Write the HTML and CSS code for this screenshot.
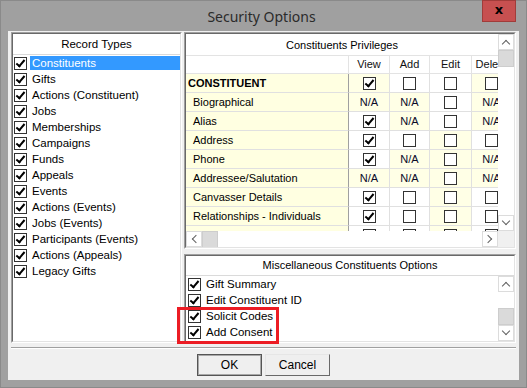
FILE: index.html
```html
<!DOCTYPE html>
<html lang="en">
<head>
    <meta charset="UTF-8">
    <title>Security Options</title>
    <link rel="stylesheet" href="styles.css">
</head>
<body>
<div class="window">
    <div class="titlebar">
        <span class="title">Security Options</span>
        <div class="close">x</div>
    </div>
    <div class="client">
        <div class="panes">
            <div class="sunken records">
                <div class="inner">
                    <div class="list-head">Record Types</div>
                    <ul class="list">
                        <li class="selected"><span class="chk on"></span><span class="label">Constituents</span></li>
                        <li><span class="chk on"></span><span class="label">Gifts</span></li>
                        <li><span class="chk on"></span><span class="label">Actions (Constituent)</span></li>
                        <li><span class="chk on"></span><span class="label">Jobs</span></li>
                        <li><span class="chk on"></span><span class="label">Memberships</span></li>
                        <li><span class="chk on"></span><span class="label">Campaigns</span></li>
                        <li><span class="chk on"></span><span class="label">Funds</span></li>
                        <li><span class="chk on"></span><span class="label">Appeals</span></li>
                        <li><span class="chk on"></span><span class="label">Events</span></li>
                        <li><span class="chk on"></span><span class="label">Actions (Events)</span></li>
                        <li><span class="chk on"></span><span class="label">Jobs (Events)</span></li>
                        <li><span class="chk on"></span><span class="label">Participants (Events)</span></li>
                        <li><span class="chk on"></span><span class="label">Actions (Appeals)</span></li>
                        <li><span class="chk on"></span><span class="label">Legacy Gifts</span></li>
                    </ul>
                </div>
            </div>
            <div class="right">
                <div class="sunken privileges">
                    <div class="inner priv">
                        <div class="priv-head">Constituents Privileges</div>
                        <div class="vscroll">
                            <div class="sb-btn"><span class="arrow up"></span></div>
                            <div class="sb-thumb"></div>
                            <div class="sb-track"></div>
                            <div class="sb-btn"><span class="arrow down"></span></div>
                        </div>
                        <div class="table-wrap">
                            <div class="table">
                                <div class="th first"></div>
                                <div class="th">View</div>
                                <div class="th">Add</div>
                                <div class="th">Edit</div>
                                <div class="th">Delete</div>

                                <div class="td name bold">CONSTITUENT</div>
                                <div class="td y"><span class="chk on"></span></div>
                                <div class="td"><span class="chk"></span></div>
                                <div class="td"><span class="chk"></span></div>
                                <div class="td y"><span class="chk"></span></div>

                                <div class="td name">Biographical</div>
                                <div class="td y">N/A</div>
                                <div class="td y">N/A</div>
                                <div class="td"><span class="chk"></span></div>
                                <div class="td y">N/A</div>

                                <div class="td name">Alias</div>
                                <div class="td"><span class="chk on"></span></div>
                                <div class="td y">N/A</div>
                                <div class="td"><span class="chk"></span></div>
                                <div class="td y">N/A</div>

                                <div class="td name">Address</div>
                                <div class="td"><span class="chk on"></span></div>
                                <div class="td"><span class="chk"></span></div>
                                <div class="td y"><span class="chk"></span></div>
                                <div class="td"><span class="chk"></span></div>

                                <div class="td name">Phone</div>
                                <div class="td"><span class="chk on"></span></div>
                                <div class="td y">N/A</div>
                                <div class="td y"><span class="chk"></span></div>
                                <div class="td y">N/A</div>

                                <div class="td name">Addressee/Salutation</div>
                                <div class="td y">N/A</div>
                                <div class="td y">N/A</div>
                                <div class="td y"><span class="chk"></span></div>
                                <div class="td y">N/A</div>

                                <div class="td name">Canvasser Details</div>
                                <div class="td"><span class="chk on"></span></div>
                                <div class="td"><span class="chk"></span></div>
                                <div class="td y"><span class="chk"></span></div>
                                <div class="td"><span class="chk"></span></div>

                                <div class="td name">Relationships - Individuals</div>
                                <div class="td"><span class="chk on"></span></div>
                                <div class="td"><span class="chk"></span></div>
                                <div class="td y"><span class="chk"></span></div>
                                <div class="td"><span class="chk"></span></div>

                                <div class="td name">Relationships - Organizations</div>
                                <div class="td"><span class="chk on"></span></div>
                                <div class="td"><span class="chk on"></span></div>
                                <div class="td y"><span class="chk"></span></div>
                                <div class="td"><span class="chk"></span></div>
                            </div>
                        </div>
                        <div class="hscroll">
                            <div class="sb-btn"><span class="arrow left"></span></div>
                            <div class="sb-thumb"></div>
                            <div class="sb-track"></div>
                            <div class="sb-btn"><span class="arrow right"></span></div>
                        </div>
                        <div class="corner"></div>
                    </div>
                </div>
                <div class="sunken misc">
                    <div class="inner misc-grid">
                        <div class="misc-head">Miscellaneous Constituents Options</div>
                        <ul class="list misc-list">
                            <li><span class="chk on"></span><span class="label">Gift Summary</span></li>
                            <li><span class="chk on"></span><span class="label">Edit Constituent ID</span></li>
                            <li><span class="chk on"></span><span class="label">Solicit Codes</span></li>
                            <li><span class="chk on"></span><span class="label">Add Consent</span></li>
                        </ul>
                        <div class="vscroll">
                            <div class="sb-btn"><span class="arrow up"></span></div>
                            <div class="sb-track"></div>
                            <div class="sb-thumb"></div>
                            <div class="sb-btn"><span class="arrow down"></span></div>
                        </div>
                    </div>
                </div>
            </div>
        </div>
        <div class="separator"></div>
        <div class="buttons">
            <div class="btn default">OK</div>
            <div class="btn">Cancel</div>
        </div>
    </div>
    <div class="highlight"></div>
</div>
</body>
</html>
```

FILE: styles.css
```css
* {
    box-sizing: border-box;
}

body {
    margin: 0;
    background: #a0a0a0;
    font-family: "Liberation Sans", Arial, sans-serif;
    font-size: 11px;
    color: #000;
}

.window {
    position: relative;
    width: 527px;
    height: 388px;
    background: #a0a0a0;
    border: 1px solid #8a8a8a;
}

.titlebar {
    height: 30px;
    display: flex;
    align-items: center;
    justify-content: center;
}

.title {
    font-family: "Noto Sans", "Open Sans", sans-serif;
    font-size: 14px;
    color: #2b2b2b;
    margin-left: -4px;
}

.close {
    position: absolute;
    top: -1px;
    right: 10px;
    width: 34px;
    height: 22px;
    background: #c75050;
    border: 1px solid #a13c3a;
    color: #000;
    font-family: "DejaVu Sans", sans-serif;
    font-weight: bold;
    font-size: 13px;
    line-height: 17px;
    text-align: center;
}

.client {
    margin: 0 7px;
    height: 349px;
    background: #f0f0f0;
    padding: 1px 3px 0;
}

.panes {
    display: flex;
    gap: 2px;
}

.sunken {
    border: 1px solid;
    border-color: #a0a0a0 #fff #fff #a0a0a0;
}

.inner {
    height: 100%;
    background: #fff;
    border: 1px solid;
    border-color: #696969 #e3e3e3 #e3e3e3 #696969;
    overflow: hidden;
}

.records {
    width: 171px;
    height: 311px;
}

.list-head {
    height: 21px;
    line-height: 20px;
    text-align: center;
    font-size: 11.5px;
    border-bottom: 1px solid #dadada;
}

.list {
    list-style: none;
    margin: 0;
    padding: 0;
}

.list li {
    height: 16px;
    display: flex;
    align-items: center;
    padding-left: 1px;
}

.list .label {
    flex: 1;
    height: 14px;
    line-height: 14px;
    margin-left: 3px;
    padding-left: 2px;
    font-size: 11.5px;
}

.list li.selected .label {
    background: #3399ff;
    color: #fff;
}

.chk {
    position: relative;
    display: inline-block;
    width: 13px;
    height: 13px;
    border: 1px solid #333;
    background: #fff;
    flex: none;
}

.chk.on::after {
    content: "";
    position: absolute;
    left: 3px;
    top: 0;
    width: 3px;
    height: 7px;
    border: solid #000;
    border-width: 0 2px 2px 0;
    transform: rotate(40deg);
}

.right {
    width: 332px;
    display: flex;
    flex-direction: column;
    gap: 5px;
}

.privileges {
    height: 217px;
}

.priv {
    display: grid;
    grid-template-columns: 1fr 16px;
    grid-template-rows: 21px 1fr 16px;
}

.priv-head {
    line-height: 22px;
    text-align: center;
    font-size: 11px;
}

.vscroll {
    grid-row: span 2;
    display: flex;
    flex-direction: column;
    background: #fff;
}

.hscroll {
    display: flex;
    background: #fff;
}

.sb-btn {
    flex: none;
    width: 16px;
    height: 16px;
    border: 1px solid #dcdcdc;
    background: #fff;
    display: flex;
    align-items: center;
    justify-content: center;
}

.sb-thumb {
    flex: none;
    width: 16px;
    height: 17px;
    background: #dadada;
    border: 1px solid #cdcdcd;
}

.sb-track {
    flex: 1;
}

.arrow {
    width: 6px;
    height: 6px;
    border: solid #606060;
    border-width: 1px 0 0 1px;
}

.arrow.up {
    transform: translateY(2px) rotate(45deg);
}

.arrow.down {
    transform: translateY(-2px) rotate(225deg);
}

.arrow.left {
    transform: translateX(2px) rotate(-45deg);
}

.arrow.right {
    transform: translateX(-2px) rotate(135deg);
}

.corner {
    background: #f0f0f0;
}

.table-wrap {
    overflow: hidden;
    border-top: 1px solid #e3e3e3;
}

.table {
    display: grid;
    grid-template-columns: 163px 41px 40px 42px 40px;
    grid-template-rows: 18px;
    grid-auto-rows: 19px;
    font-size: 11px;
}

.th {
    text-align: center;
    line-height: 17px;
    border-right: 1px solid #e3e3e3;
    border-bottom: 1px solid #e3e3e3;
    color: #111;
    white-space: nowrap;
    overflow: hidden;
}

.td {
    display: flex;
    align-items: center;
    justify-content: center;
    border-right: 1px solid #e0e0e0;
    border-bottom: 1px solid #e0e0e0;
    white-space: nowrap;
    overflow: hidden;
    color: #0a0a28;
}

.td.y {
    background: #ffffe6;
}

.td.name {
    justify-content: flex-start;
    padding-left: 7px;
    background: #ffffe1;
    border-right-color: #a0a0a0;
    color: #000;
}

.td.bold {
    font-weight: bold;
    padding-left: 2px;
}

.misc {
    height: 89px;
}

.misc-grid {
    display: grid;
    grid-template-columns: 1fr 16px;
    grid-template-rows: 20px 1fr;
}

.misc-head {
    grid-column: span 2;
    line-height: 19px;
    text-align: center;
    font-size: 11px;
    border-bottom: 1px solid #dadada;
}

.misc-list li {
    padding-left: 2px;
}

.misc-grid .vscroll {
    grid-row: auto;
}

.separator {
    margin: 4px 0 0;
    height: 2px;
    border-top: 1px solid #a0a0a0;
    border-bottom: 1px solid #fff;
}

.buttons {
    display: flex;
    justify-content: center;
    gap: 3px;
    margin-top: 5px;
}

.btn {
    width: 65px;
    height: 22px;
    line-height: 20px;
    text-align: center;
    font-size: 12px;
    background: #efefef;
    border: 1px solid;
    border-color: #e6e6e6 #696969 #696969 #e6e6e6;
}

.btn.default {
    border-color: #555;
    box-shadow: inset 0 0 0 1px #a8a8a8;
}

.highlight {
    position: absolute;
    left: 176px;
    top: 306px;
    width: 102px;
    height: 37px;
    border: 3px solid #ec1c24;
}
```
